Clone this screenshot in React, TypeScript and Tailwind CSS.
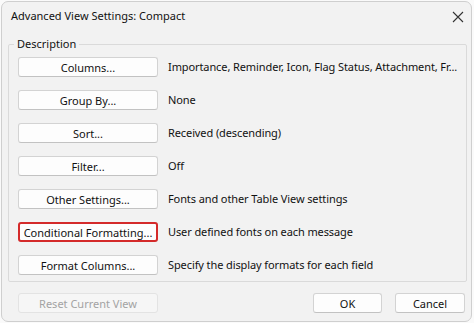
import React from 'react';

// Outlook "Advanced View Settings" dialog: each row is a button plus a one-line summary.

const ROWS: { label: string; summary: string; focused?: boolean }[] = [
	{ label: 'Columns...', summary: 'Importance, Reminder, Icon, Flag Status, Attachment, Fr...' },
	{ label: 'Group By...', summary: 'None' },
	{ label: 'Sort...', summary: 'Received (descending)' },
	{ label: 'Filter...', summary: 'Off' },
	{ label: 'Other Settings...', summary: 'Fonts and other Table View settings' },
	{ label: 'Conditional Formatting...', summary: 'User defined fonts on each message', focused: true },
	{ label: 'Format Columns...', summary: 'Specify the display formats for each field' }
];

function DlgButton({ children, focused, disabled, className = '' }: { children: React.ReactNode; focused?: boolean; disabled?: boolean; className?: string }) {
	const look = disabled
		? 'border-[#e3e3e3] bg-[#f6f6f6] text-[#a3a3a3]'
		: focused
			? 'border-2 border-[#d42a2a] bg-[#fdfdfd] text-[#111]'
			: 'border-[#d3d3d3] border-b-[#c2c2c2] bg-[#fdfdfd] text-[#111]';
	return (
		<button type="button" disabled={disabled} className={`flex h-[20px] items-center justify-center whitespace-nowrap rounded-[3px] border text-[11px] leading-none ${look} ${className}`}>
			{children}
		</button>
	);
}

export default function App() {
	return (
		<div className="h-[323px] w-[474px] bg-[#fafafa] p-[1px]" style={{ fontFamily: '"Noto Sans", "Open Sans", sans-serif' }}>
			<div className="flex h-full w-[471px] flex-col rounded-[7px] border border-[#cfcfcf] bg-[#f2f2f2] text-[#111]">
				<div className="flex h-[29px] shrink-0 items-center justify-between pl-[9px] pr-[5px] text-[11px]">
					<span>Advanced View Settings: Compact</span>
					<svg width="12" height="12" viewBox="0 0 12 12" className="mr-[2px]">
						<path d="M1 1L11 11M11 1L1 11" stroke="#333" strokeWidth="1.1" />
					</svg>
				</div>
				<fieldset className="mx-[6px] mt-[6px] h-[245px] rounded-[2px] border border-[#dadada] px-[9px]">
					<legend className="-ml-[4px] px-[3px] text-[11px] leading-[14px]">Description</legend>
					<div className="mt-[6px] flex flex-col gap-[13px]">
						{ROWS.map((r) => (
							<div key={r.label} className="flex items-center gap-[10px]">
								<DlgButton focused={r.focused} className="w-[140px] shrink-0">
									{r.label}
								</DlgButton>
								<span className="min-w-0 whitespace-nowrap text-[11px] tracking-[-0.1px]">{r.summary}</span>
							</div>
						))}
					</div>
				</fieldset>
				<div className="mt-[11px] flex items-center pl-[16px] pr-[6px]">
					<DlgButton disabled className="w-[140px]">
						Reset Current View
					</DlgButton>
					<div className="ml-auto flex gap-[13px]">
						<DlgButton className="w-[69px]">OK</DlgButton>
						<DlgButton className="w-[70px]">Cancel</DlgButton>
					</div>
				</div>
			</div>
		</div>
	);
}
